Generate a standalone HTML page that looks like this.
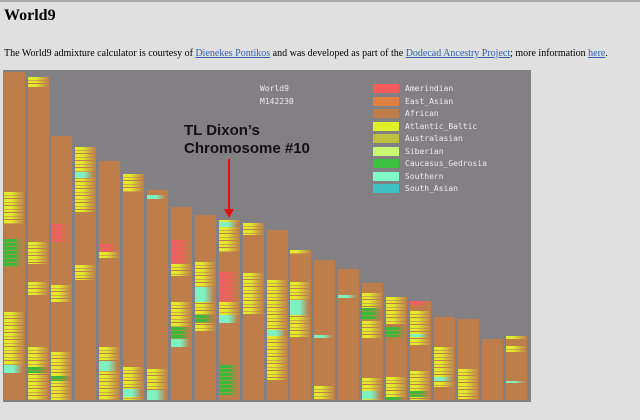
<!DOCTYPE html>
<html><head><meta charset="utf-8"><style>
body{margin:0;background:#e0e0e0;width:640px;height:420px;overflow:hidden;font-family:"Liberation Serif",serif;color:#000;border-top:2px solid #aaa;box-sizing:border-box;position:relative}
h1{position:absolute;left:4px;top:5px;margin:0;font-size:16px;font-weight:bold}
p{position:absolute;left:4px;top:46px;margin:0;font-size:10px;white-space:nowrap}
a{color:#3060b0;text-decoration:underline}
#fr{position:absolute;left:3px;top:68px;width:528px;height:332px;background:#828082}
.b{position:absolute;width:21px;bottom:20px;background:#bf7d4a;overflow:hidden}
.b i{position:absolute;left:0;width:100%;display:block}
.y{background:linear-gradient(90deg,rgba(191,125,74,0) 35%,rgba(191,125,74,.7) 80%,#bf7d4a),repeating-linear-gradient(180deg,#e3ea2c 0 3px,#cfa848 3px 4px,#e3ea2c 4px 6px,#bf7d4a 6px 7px)}
.g{background:linear-gradient(90deg,rgba(191,125,74,0) 45%,#bf7d4a 90%),repeating-linear-gradient(180deg,#3cb83c 0 3px,#9a9a40 3px 4px)}
.c{background:linear-gradient(90deg,rgba(191,125,74,0) 45%,#bf7d4a 90%),#7ff0c0}
.r{background:linear-gradient(90deg,rgba(191,125,74,0) 45%,#bf7d4a 90%),repeating-linear-gradient(180deg,#f06060 0 3px,#d07050 3px 4px)}
.t{position:absolute;font-family:"DejaVu Sans Mono","Liberation Mono",monospace;font-size:8px;color:#eee}
.sw{position:absolute;left:373px;width:26px;height:9px}
.lab{position:absolute;left:405px;font-family:"DejaVu Sans Mono","Liberation Mono",monospace;font-size:8px;color:#eee}
.ann{position:absolute;left:184px;top:120px;font-family:"Liberation Sans",sans-serif;font-weight:bold;font-size:15px;line-height:18px;color:#111}
</style></head><body>
<h1>World9</h1>
<p>The World9 admixture calculator is courtesy of <a>Dienekes Pontikos</a> and was developed as part of the <a>Dodecad Ancestry Project</a>; more information <a>here</a>.</p>
<div id="fr"></div>
<div class="t" style="left:260px;top:82px">World9</div>
<div class="t" style="left:260px;top:95px">M142230</div>
<div class="sw" style="top:82px;background:#f55a5a"></div><div class="lab" style="top:82px">Amerindian</div>
<div class="sw" style="top:95px;background:#e08040"></div><div class="lab" style="top:95px">East_Asian</div>
<div class="sw" style="top:107px;background:#bf7d4a"></div><div class="lab" style="top:107px">African</div>
<div class="sw" style="top:120px;background:#e0f028"></div><div class="lab" style="top:120px">Atlantic_Baltic</div>
<div class="sw" style="top:132px;background:#c0c040"></div><div class="lab" style="top:132px">Australasian</div>
<div class="sw" style="top:145px;background:#c8f870"></div><div class="lab" style="top:145px">Siberian</div>
<div class="sw" style="top:157px;background:#3cc040"></div><div class="lab" style="top:157px">Caucasus_Gedrosia</div>
<div class="sw" style="top:170px;background:#80f8c8"></div><div class="lab" style="top:170px">Southern</div>
<div class="sw" style="top:182px;background:#40c0c0"></div><div class="lab" style="top:182px">South_Asian</div>
<div class="ann">TL Dixon’s<br>Chromosome #10</div>
<div style="position:absolute;left:228px;top:157px;width:2px;height:52px;background:#e01010"></div>
<div style="position:absolute;left:224px;top:207px;border-left:5px solid transparent;border-right:5px solid transparent;border-top:9px solid #e01010"></div>

<div class="b" style="left:4px;top:70px"><i class="y" style="top:120px;height:32px"></i><i class="g" style="top:167px;height:28px"></i><i class="y" style="top:240px;height:60px"></i><i class="c" style="top:293px;height:8px"></i></div>
<div class="b" style="left:28px;top:75px"><i class="y" style="top:0;height:10px"></i><i class="y" style="top:165px;height:22px"></i><i class="y" style="top:205px;height:14px"></i><i class="y" style="top:270px;height:54px"></i><i class="g" style="top:290px;height:6px"></i></div>
<div class="b" style="left:51px;top:134px"><i class="r" style="top:88px;height:18px"></i><i class="y" style="top:149px;height:17px"></i><i class="y" style="top:216px;height:49px"></i><i class="g" style="top:240px;height:5px"></i></div>
<div class="b" style="left:75px;top:145px"><i class="y" style="top:0;height:65px"></i><i class="c" style="top:25px;height:6px"></i><i class="y" style="top:118px;height:15px"></i></div>
<div class="b" style="left:99px;top:159px"><i class="r" style="top:83px;height:8px"></i><i class="y" style="top:91px;height:6px"></i><i class="y" style="top:186px;height:55px"></i><i class="c" style="top:200px;height:10px"></i></div>
<div class="b" style="left:123px;top:172px"><i class="y" style="top:0;height:18px"></i><i class="y" style="top:193px;height:35px"></i><i class="c" style="top:215px;height:8px"></i></div>
<div class="b" style="left:147px;top:188px"><i class="c" style="top:5px;height:4px"></i><i class="y" style="top:179px;height:33px"></i><i class="c" style="top:200px;height:10px"></i></div>
<div class="b" style="left:171px;top:205px"><i class="r" style="top:33px;height:24px"></i><i class="y" style="top:57px;height:12px"></i><i class="y" style="top:95px;height:45px"></i><i class="g" style="top:120px;height:15px"></i><i class="c" style="top:132px;height:8px"></i></div>
<div class="b" style="left:195px;top:213px"><i class="y" style="top:47px;height:70px"></i><i class="c" style="top:72px;height:15px"></i><i class="g" style="top:100px;height:8px"></i></div>
<div class="b" style="left:219px;top:218px"><i class="y" style="top:0;height:32px"></i><i class="c" style="top:2px;height:5px"></i><i class="r" style="top:52px;height:30px"></i><i class="y" style="top:82px;height:20px"></i><i class="c" style="top:95px;height:8px"></i><i class="g" style="top:145px;height:30px"></i></div>
<div class="b" style="left:243px;top:221px"><i class="y" style="top:0;height:12px"></i><i class="y" style="top:50px;height:42px"></i></div>
<div class="b" style="left:267px;top:228px"><i class="y" style="top:50px;height:100px"></i><i class="c" style="top:100px;height:6px"></i></div>
<div class="b" style="left:290px;top:248px"><i class="y" style="top:0;height:4px"></i><i class="y" style="top:32px;height:55px"></i><i class="c" style="top:50px;height:15px"></i></div>
<div class="b" style="left:314px;top:258px"><i class="c" style="top:75px;height:3px"></i><i class="y" style="top:126px;height:14px"></i></div>
<div class="b" style="left:338px;top:267px"><i class="c" style="top:26px;height:3px"></i></div>
<div class="b" style="left:362px;top:281px"><i class="y" style="top:10px;height:45px"></i><i class="g" style="top:25px;height:12px"></i><i class="y" style="top:95px;height:22px"></i><i class="c" style="top:108px;height:8px"></i></div>
<div class="b" style="left:386px;top:295px"><i class="y" style="top:0;height:28px"></i><i class="g" style="top:30px;height:10px"></i><i class="y" style="top:80px;height:24px"></i><i class="g" style="top:100px;height:4px"></i></div>
<div class="b" style="left:410px;top:299px"><i class="r" style="top:0;height:5px"></i><i class="y" style="top:10px;height:35px"></i><i class="c" style="top:33px;height:3px"></i><i class="y" style="top:70px;height:30px"></i><i class="g" style="top:90px;height:6px"></i></div>
<div class="b" style="left:434px;top:315px"><i class="y" style="top:30px;height:40px"></i><i class="c" style="top:60px;height:4px"></i></div>
<div class="b" style="left:458px;top:317px"><i class="y" style="top:50px;height:30px"></i></div>
<div class="b" style="left:482px;top:337px"></div>
<div class="b" style="left:506px;top:334px"><i class="y" style="top:0;height:3px"></i><i class="y" style="top:10px;height:7px"></i><i class="c" style="top:45px;height:2px"></i></div>
</body></html>
